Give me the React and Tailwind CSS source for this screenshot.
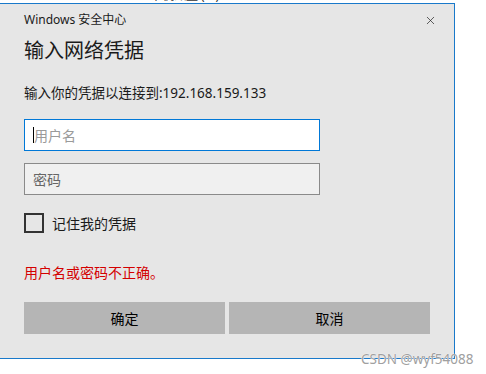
import { X } from "lucide-react";

const font = { fontFamily: '"Noto Sans", "Noto Sans CJK SC", sans-serif' };

// Windows credential prompt as seen in the reference
export default function App() {
  return (
    <div className="relative h-[374px] w-[486px] overflow-hidden bg-white" style={font}>
      {/* clipped text peeking above the dialog */}
      <div className="relative h-[3px] overflow-hidden">
        <span className="absolute left-[150px] top-[-11px] text-[12px] leading-[14px] text-[#333]">
          本机磁盘 (C:)
        </span>
      </div>

      <div className="flex h-[356px] w-[455px] flex-col border-y border-r border-[#1979ca] bg-[#e6e6e6] pl-[24px]">
        <div className="mt-[8px] flex h-[16px] items-center justify-between pr-[17px]">
          <span className="text-[12px] leading-[16px] text-[#1a1a1a]">Windows 安全中心</span>
          <X className="h-[13px] w-[13px] text-[#222]" strokeWidth={1.3} />
        </div>

        <h1 className="mt-[9px] text-[20px] leading-[28px] text-[#1a1a1a]">输入网络凭据</h1>

        <p className="mt-[19px] text-[13.5px] leading-[18px] text-[#1a1a1a]">
          输入你的凭据以连接到:192.168.159.133
        </p>

        <div className="mt-[17px] flex h-[32px] w-[296px] items-center border border-[#0078d7] bg-white pl-[8px]">
          <span className="h-[16px] w-px bg-black" />
          <span className="text-[14px] text-[#9a9a9a]">用户名</span>
        </div>

        <div className="mt-[12px] flex h-[32px] w-[296px] items-center border border-[#8a8a8a] bg-[#f0f0f0] pl-[8px]">
          <span className="text-[14px] text-[#666]">密码</span>
        </div>

        <label className="mt-[18px] flex h-[20px] items-center gap-[8px]">
          <span className="h-[20px] w-[20px] border-2 border-[#333]" />
          <span className="text-[14px] text-[#1a1a1a]">记住我的凭据</span>
        </label>

        <p className="mt-[31px] text-[14px] leading-[18px] text-[#d40000]">用户名或密码不正确。</p>

        <div className="mt-[20px] flex w-[406px] gap-[4px]">
          <button className="flex h-[32px] flex-1 items-center justify-center bg-[#b5b5b5] text-[14px] text-black">
            确定
          </button>
          <button className="flex h-[32px] flex-1 items-center justify-center bg-[#b5b5b5] text-[14px] text-black">
            取消
          </button>
        </div>
      </div>

      <span
        className="absolute left-[361px] top-[350px] text-[13.5px] leading-[18px] text-[#a0a0a0]"
        style={{ textShadow: "0 0 1px #fff, 0 0 1px #fff" }}
      >
        CSDN @wyf54088
      </span>
    </div>
  );
}
